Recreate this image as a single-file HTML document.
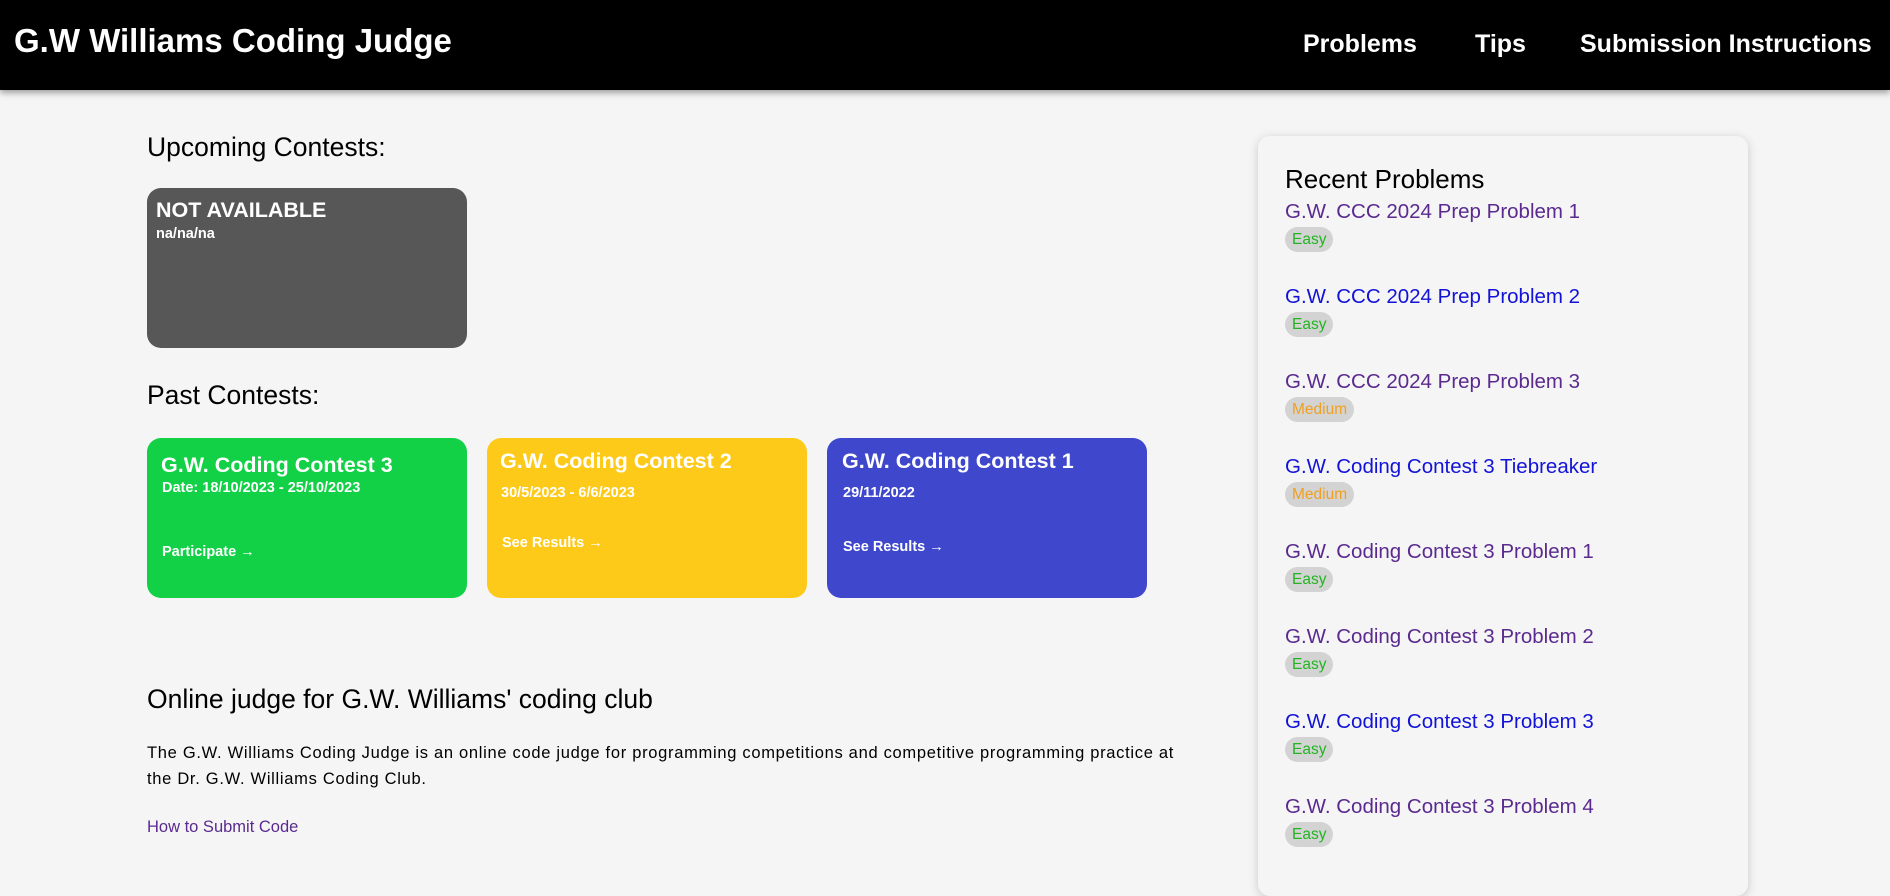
<!DOCTYPE html>
<html><head><meta charset="utf-8"><style>
*{margin:0;padding:0;box-sizing:border-box}
body{width:1890px;height:843px;overflow:hidden;background:#f5f5f5;font-family:"Liberation Sans",sans-serif;position:relative;color:#000}
.hdr{position:absolute;left:0;top:0;width:1890px;height:90px;background:#000;box-shadow:0 3px 6px rgba(0,0,0,.35)}
.abs{position:absolute;white-space:nowrap}
.title{left:14px;top:22px;color:#fff;font-size:33px;font-weight:bold}
.nav{top:30px;color:#fff;font-size:25px;font-weight:bold}
h2{position:absolute;font-weight:normal;font-size:26.5px;white-space:nowrap}
.card{position:absolute;width:320px;height:160px;border-radius:14px;color:#fff;font-weight:bold}
.card .t{position:absolute;font-size:21.5px}
.card .d{position:absolute;font-size:14.5px}
.card .l{position:absolute;font-size:14.5px}
.panel{position:absolute;left:1258px;top:136px;width:490px;height:760px;border-radius:12px;box-shadow:0 2px 10px rgba(0,0,0,.18);background:#f5f5f5}
.it{position:absolute;left:1285px;font-size:20.5px;white-space:nowrap}
.bd{position:absolute;left:1285px;height:25px;border-radius:13px;background:#d3d3d3;font-size:15.5px;line-height:25px;padding:0 7px}
.v{color:#5a2a8f}.u{color:#1212d8}.e{color:#22b522}.m{color:#f0a020}
</style></head><body>
<div class="hdr"></div>
<div class="abs title">G.W Williams Coding Judge</div>
<div class="abs nav" style="left:1303px">Problems</div>
<div class="abs nav" style="left:1475px">Tips</div>
<div class="abs nav" style="left:1580px">Submission Instructions</div>

<h2 style="left:147px;top:132px">Upcoming Contests:</h2>
<div class="card" style="left:147px;top:188px;background:#575757">
<div class="t" style="left:9px;top:10px">NOT AVAILABLE</div>
<div class="d" style="left:9px;top:38px">na/na/na</div></div>

<h2 style="left:147px;top:380px">Past Contests:</h2>
<div class="card" style="left:147px;top:438px;background:#12d146">
<div class="t" style="left:14px;top:15px">G.W. Coding Contest 3</div>
<div class="d" style="left:15px;top:42px">Date: 18/10/2023 - 25/10/2023</div>
<div class="l" style="left:15px;top:106px">Participate →</div></div>
<div class="card" style="left:487px;top:438px;background:#fdca1a">
<div class="t" style="left:13px;top:11px">G.W. Coding Contest 2</div>
<div class="d" style="left:14px;top:47px">30/5/2023 - 6/6/2023</div>
<div class="l" style="left:15px;top:97px">See Results →</div></div>
<div class="card" style="left:827px;top:438px;background:#3f48cc">
<div class="t" style="left:15px;top:11px">G.W. Coding Contest 1</div>
<div class="d" style="left:16px;top:47px">29/11/2022</div>
<div class="l" style="left:16px;top:101px">See Results →</div></div>

<h2 style="left:147px;top:684px">Online judge for G.W. Williams' coding club</h2>
<div class="abs" style="left:147px;top:740px;font-size:16.5px;letter-spacing:0.7px;line-height:26px;white-space:normal;width:1050px">The G.W. Williams Coding Judge is an online code judge for programming competitions and competitive programming practice at the Dr. G.W. Williams Coding Club.</div>
<div class="abs" style="left:147px;top:818px;font-size:16.5px;color:#5a2a8f">How to Submit Code</div>

<div class="panel"></div>
<div class="abs" style="left:1285px;top:164px;font-size:26px">Recent Problems</div>
<div class="it v" style="top:200px">G.W. CCC 2024 Prep Problem 1</div><div class="bd e" style="top:227px">Easy</div>
<div class="it u" style="top:285px">G.W. CCC 2024 Prep Problem 2</div><div class="bd e" style="top:312px">Easy</div>
<div class="it v" style="top:370px">G.W. CCC 2024 Prep Problem 3</div><div class="bd m" style="top:397px">Medium</div>
<div class="it u" style="top:455px">G.W. Coding Contest 3 Tiebreaker</div><div class="bd m" style="top:482px">Medium</div>
<div class="it v" style="top:540px">G.W. Coding Contest 3 Problem 1</div><div class="bd e" style="top:567px">Easy</div>
<div class="it v" style="top:625px">G.W. Coding Contest 3 Problem 2</div><div class="bd e" style="top:652px">Easy</div>
<div class="it u" style="top:710px">G.W. Coding Contest 3 Problem 3</div><div class="bd e" style="top:737px">Easy</div>
<div class="it v" style="top:795px">G.W. Coding Contest 3 Problem 4</div><div class="bd e" style="top:822px">Easy</div>
</body></html>
